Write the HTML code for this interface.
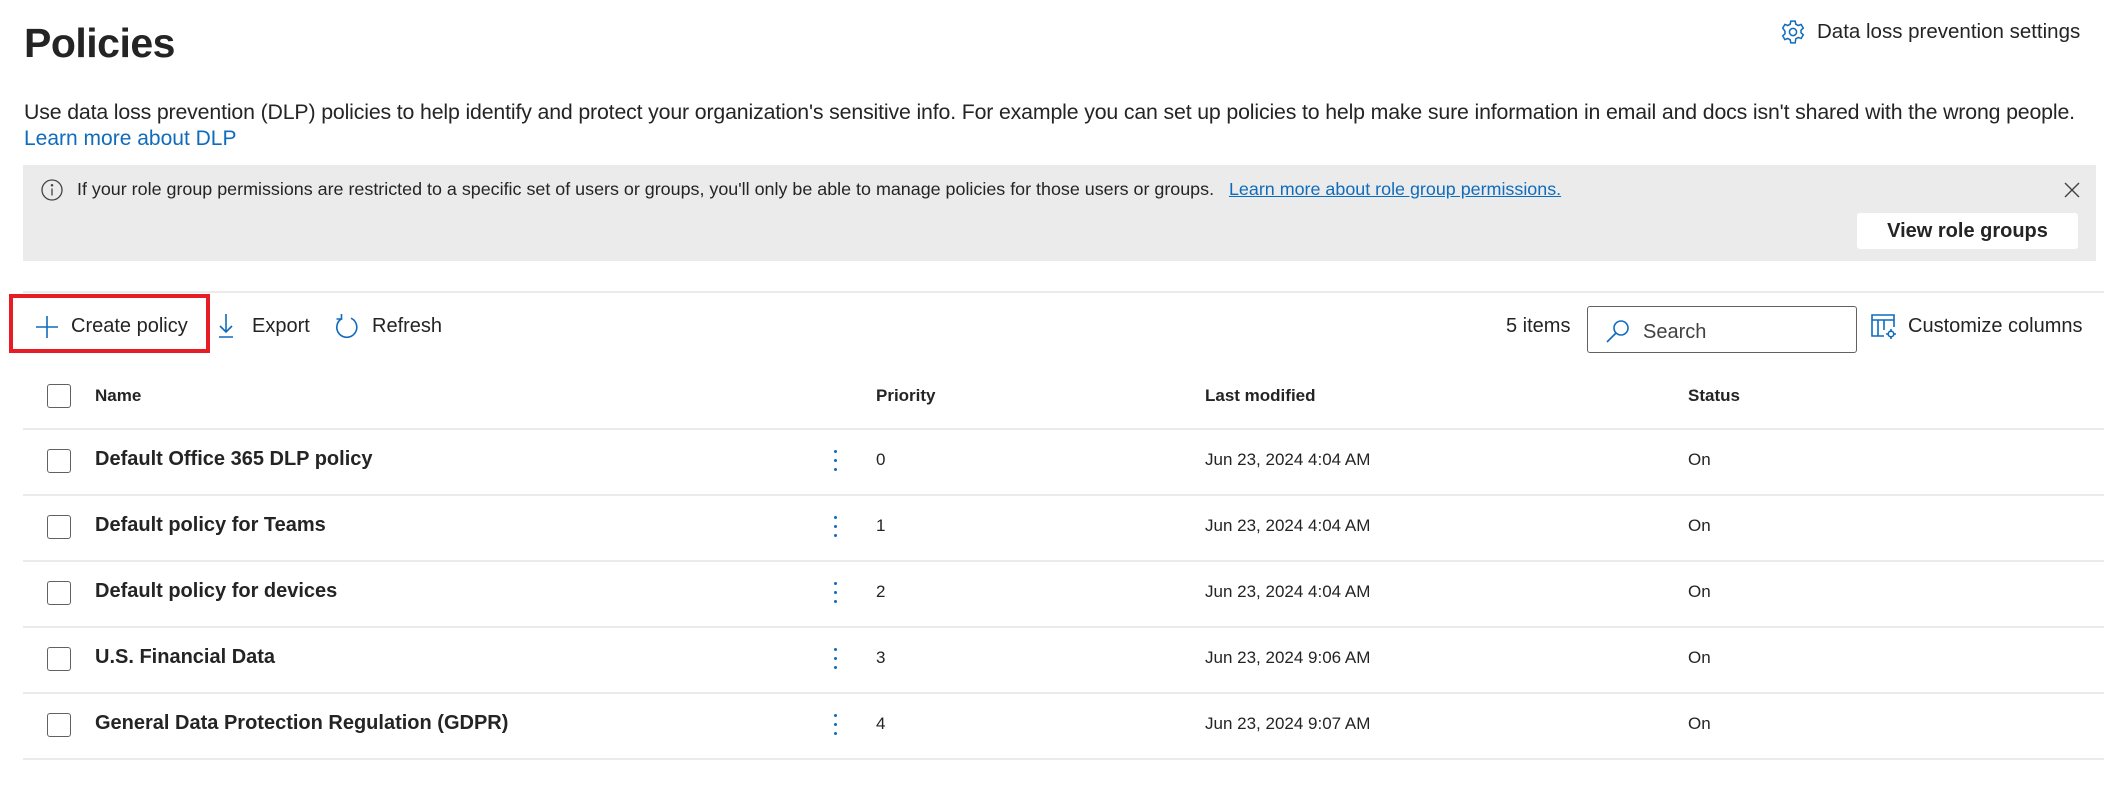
<!DOCTYPE html>
<html><head><meta charset="utf-8"><style>
*{margin:0;padding:0;box-sizing:border-box}
body{width:2119px;height:792px;background:#fff;font-family:"Liberation Sans",sans-serif;color:#242424;position:relative;overflow:hidden}
.a{position:absolute;white-space:nowrap}
.blue{color:#0f6cbd}
.line{position:absolute;left:23px;width:2081px;height:2px;background:#ebebeb}
.cb{position:absolute;left:47px;width:24px;height:24px;border:1.5px solid #616161;border-radius:3px;background:#fff}
.name{left:95px;font-size:20px;font-weight:bold}
.v{font-size:17px}
.keb{position:absolute;left:834px;width:4px}
.keb i{display:block;width:3px;height:3px;border-radius:50%;background:#0f6cbd;margin-bottom:6px}
</style></head><body>
<div class="a" style="left:24px;top:20px;font-size:41px;font-weight:bold;letter-spacing:-0.5px">Policies</div>
<svg class="a" style="left:1780px;top:19px" width="26" height="26" viewBox="0 0 24 24" fill="none" stroke="#0f6cbd" stroke-width="1.4"><path d="M10 2h4l.6 2.8 2.2 1.2 2.7-1 2 3.4-2.1 1.9v2.4l2.1 1.9-2 3.4-2.7-1-2.2 1.2L14 22h-4l-.6-2.8-2.2-1.2-2.7 1-2-3.4 2.1-1.9v-2.4L2.5 8.4l2-3.4 2.7 1 2.2-1.2z"/><circle cx="12" cy="12" r="3.3"/></svg>
<div class="a" style="left:1817px;top:20px;font-size:20.5px">Data loss prevention settings</div>
<div class="a" style="left:24px;top:100px;font-size:21.3px;letter-spacing:-0.15px">Use data loss prevention (DLP) policies to help identify and protect your organization's sensitive info. For example you can set up policies to help make sure information in email and docs isn't shared with the wrong people.</div>
<div class="a blue" style="left:24px;top:127px;font-size:21px">Learn more about DLP</div>
<div class="a" style="left:23px;top:165px;width:2073px;height:96px;background:#ebebeb"></div>
<svg class="a" style="left:40px;top:178px" width="24" height="24" viewBox="0 0 24 24" fill="none" stroke="#424242" stroke-width="1.3"><circle cx="12" cy="12" r="10"/><path d="M12 10.5v7"/><circle cx="12" cy="7.3" r=".6" fill="#424242"/></svg>
<div class="a" style="left:77px;top:179px;font-size:17.9px">If your role group permissions are restricted to a specific set of users or groups, you'll only be able to manage policies for those users or groups.&nbsp;&nbsp;&nbsp;<span style="color:#0f6cbd;text-decoration:underline">Learn more about role group permissions.</span></div>
<svg class="a" style="left:2063px;top:181px" width="18" height="18" viewBox="0 0 18 18" stroke="#424242" stroke-width="1.4"><path d="M2 2l14 14M16 2L2 16"/></svg>
<div class="a" style="left:1857px;top:213px;width:221px;height:36px;background:#fff;border-radius:3px;font-size:20px;font-weight:bold;text-align:center;line-height:36px">View role groups</div>
<div class="line" style="top:291px;height:2px"></div>
<div class="a" style="left:9px;top:294px;width:201px;height:59px;border:4px solid #e81c24"></div>
<svg class="a" style="left:35px;top:315px" width="24" height="24" viewBox="0 0 24 24" stroke="#0f6cbd" stroke-width="1.6"><path d="M12 1v22M1 12h22"/></svg>
<div class="a" style="left:71px;top:315px;font-size:20px">Create policy</div>
<svg class="a" style="left:217px;top:313px" width="18" height="26" viewBox="0 0 18 26" fill="none" stroke="#0f6cbd" stroke-width="1.6"><path d="M9 1v18M3 13l6 6 6-6M2 24h14"/></svg>
<div class="a" style="left:252px;top:315px;font-size:20px">Export</div>
<svg class="a" style="left:334px;top:313px" width="26" height="28" viewBox="0 0 26 28" fill="none" stroke="#0f6cbd" stroke-width="1.6"><path d="M8 5.5A10 10 0 1 0 17 5.2"/><path d="M7.5 1v5h-5"/></svg>
<div class="a" style="left:372px;top:315px;font-size:20px">Refresh</div>
<div class="a" style="left:1506px;top:315px;font-size:20px">5 items</div>
<div class="a" style="left:1587px;top:306px;width:270px;height:47px;border:1.5px solid #616161;border-radius:3px"></div>
<svg class="a" style="left:1605px;top:318px" width="26" height="26" viewBox="0 0 26 26" fill="none" stroke="#0f6cbd" stroke-width="1.6"><circle cx="16" cy="10" r="7"/><path d="M11 15L2 24"/></svg>
<div class="a" style="left:1643px;top:321px;font-size:20px;color:#424242">Search</div>
<svg class="a" style="left:1871px;top:314px" width="26" height="26" viewBox="0 0 26 26" fill="none" stroke="#0f6cbd" stroke-width="1.6"><path d="M13 22H1V1h22v12M1 6h22M7 6v16M13 6v10"/><circle cx="20" cy="20" r="2.8"/><path d="M20 15v2M20 23v2M15 20h2M23 20h2"/></svg>
<div class="a" style="left:1908px;top:315px;font-size:20px">Customize columns</div>
<div class="cb" style="top:384px"></div>
<div class="a" style="left:95px;top:386px;font-size:17px;font-weight:bold">Name</div>
<div class="a" style="left:876px;top:386px;font-size:17px;font-weight:bold">Priority</div>
<div class="a" style="left:1205px;top:386px;font-size:17px;font-weight:bold">Last modified</div>
<div class="a" style="left:1688px;top:386px;font-size:17px;font-weight:bold">Status</div>
<div class="line" style="top:428px"></div>
<div class="cb" style="top:449px"></div><div class="a name" style="top:448px">Default Office 365 DLP policy</div><div class="keb" style="top:450px"><i></i><i></i><i></i></div><div class="a v" style="left:876px;top:450px">0</div><div class="a v" style="left:1205px;top:450px">Jun 23, 2024 4:04 AM</div><div class="a v" style="left:1688px;top:450px">On</div>
<div class="line" style="top:494px"></div>
<div class="cb" style="top:515px"></div><div class="a name" style="top:514px">Default policy for Teams</div><div class="keb" style="top:516px"><i></i><i></i><i></i></div><div class="a v" style="left:876px;top:516px">1</div><div class="a v" style="left:1205px;top:516px">Jun 23, 2024 4:04 AM</div><div class="a v" style="left:1688px;top:516px">On</div>
<div class="line" style="top:560px"></div>
<div class="cb" style="top:581px"></div><div class="a name" style="top:580px">Default policy for devices</div><div class="keb" style="top:582px"><i></i><i></i><i></i></div><div class="a v" style="left:876px;top:582px">2</div><div class="a v" style="left:1205px;top:582px">Jun 23, 2024 4:04 AM</div><div class="a v" style="left:1688px;top:582px">On</div>
<div class="line" style="top:626px"></div>
<div class="cb" style="top:647px"></div><div class="a name" style="top:646px">U.S. Financial Data</div><div class="keb" style="top:648px"><i></i><i></i><i></i></div><div class="a v" style="left:876px;top:648px">3</div><div class="a v" style="left:1205px;top:648px">Jun 23, 2024 9:06 AM</div><div class="a v" style="left:1688px;top:648px">On</div>
<div class="line" style="top:692px"></div>
<div class="cb" style="top:713px"></div><div class="a name" style="top:712px">General Data Protection Regulation (GDPR)</div><div class="keb" style="top:714px"><i></i><i></i><i></i></div><div class="a v" style="left:876px;top:714px">4</div><div class="a v" style="left:1205px;top:714px">Jun 23, 2024 9:07 AM</div><div class="a v" style="left:1688px;top:714px">On</div>
<div class="line" style="top:758px"></div>
</body></html>
